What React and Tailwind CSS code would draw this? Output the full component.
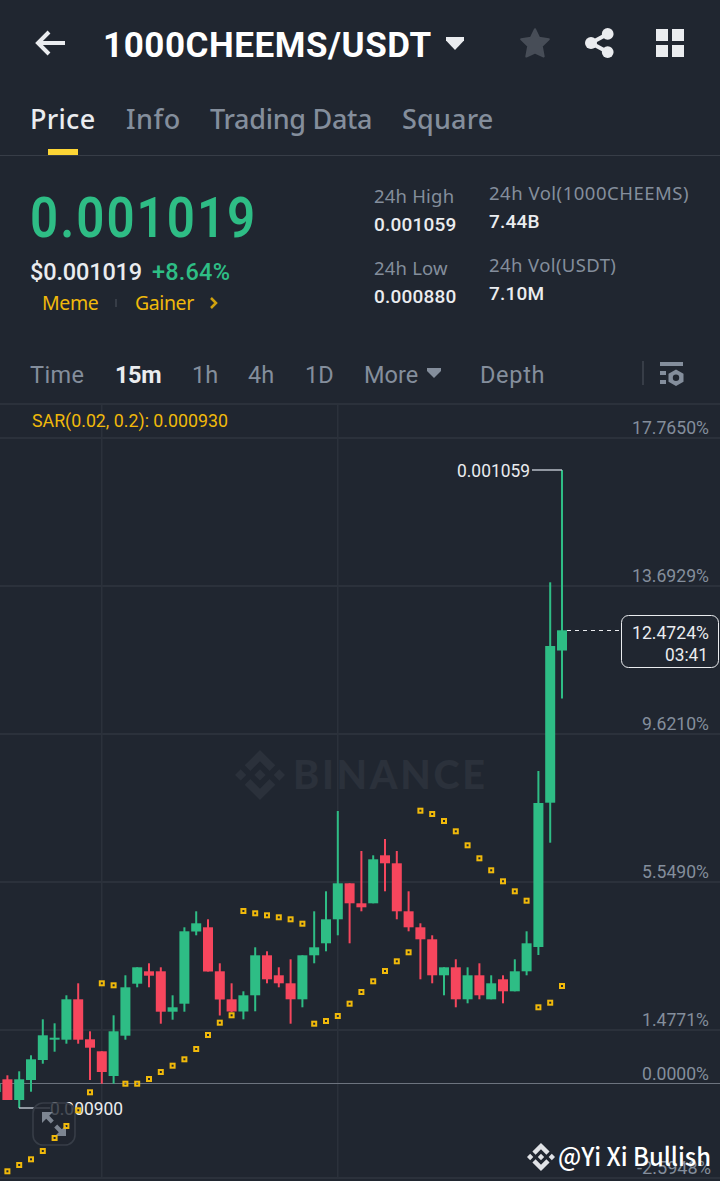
import { SiBinance } from 'react-icons/si'

const GREEN = '#2ebd85'
const RED = '#f6465d'
const BG = '#202630'

const STEP = 11.8
const FIRST_X = 7.4

// [direction, high, body top, body bottom, low]
const candles = [
  ['d', 1075.3, 1079.3, 1100, 1100],
  ['u', 1071.3, 1079.3, 1100, 1108],
  ['u', 1055.3, 1059.3, 1080, 1091.7],
  ['u', 1019.3, 1035.3, 1060, 1063.7],
  ['u', 1023.3, 1037.7, 1039.7, 1051.7],
  ['u', 995.3, 999.3, 1039.7, 1043.7],
  ['d', 983.3, 999.3, 1039.7, 1043.7],
  ['d', 1031.3, 1039.3, 1047.7, 1080],
  ['d', 1051.3, 1051.3, 1072, 1083.7],
  ['u', 1015.3, 1031.3, 1076, 1083.7],
  ['u', 975.3, 987.3, 1035.7, 1039.7],
  ['u', 967.3, 967.3, 983.7, 987.3],
  ['d', 963.3, 971.3, 975.7, 987.3],
  ['d', 967.3, 971.3, 1011.7, 1023.7],
  ['u', 995.3, 1007.3, 1011.7, 1019.7],
  ['u', 927.3, 931.3, 1003.7, 1011.7],
  ['u', 911.3, 923.3, 931.5, 935.3],
  ['d', 919.3, 927.3, 971.5, 971.5],
  ['d', 963.3, 971.3, 999.5, 1015.5],
  ['d', 983.3, 999.3, 1011.5, 1012],
  ['u', 991.3, 995.3, 1011.5, 1019.3],
  ['u', 947.3, 955.3, 995.3, 1011.3],
  ['d', 951.3, 955.3, 979.3, 983.3],
  ['d', 967.3, 975.3, 983.3, 987.3],
  ['d', 959.3, 983.3, 999.3, 1023.7],
  ['u', 955.3, 955.3, 999.3, 1007.3],
  ['u', 911.3, 947.3, 955.3, 963.3],
  ['u', 891.3, 919.3, 943.3, 951.3],
  ['u', 811, 883.3, 919.3, 935.3],
  ['d', 883.3, 883.3, 903.3, 943.3],
  ['d', 851, 903.3, 907.3, 911.3],
  ['u', 855.3, 859.3, 903.3, 903.3],
  ['d', 839, 855.3, 863.3, 891.3],
  ['d', 851, 863.3, 911.3, 919.3],
  ['d', 891.3, 911.3, 927.3, 931.3],
  ['d', 923.3, 927.3, 939.3, 979.3],
  ['d', 935.3, 939.3, 975.3, 983.3],
  ['u', 967.3, 967.3, 975.3, 995.3],
  ['d', 959.3, 967.3, 999.3, 1007.3],
  ['u', 967.3, 975.3, 999.3, 1003.3],
  ['d', 963.3, 975.3, 995.3, 999.3],
  ['u', 975.3, 983.3, 999.3, 999.3],
  ['d', 975.3, 979.3, 991.3, 1003.3],
  ['u', 959.3, 971.3, 991.3, 991.3],
  ['u', 931.3, 943.3, 971.3, 975.3],
  ['u', 771, 803, 947, 955],
  ['u', 582.3, 646, 802.7, 842.7],
  ['u', 470, 630.3, 650.5, 698.5],
]

// parabolic SAR, one point per candle
const sar = [
  1171.3, 1165, 1159.3, 1151, 1138, 1126, 1110.3, 1092.3, 983.3, 985.3, 1083.7, 1083.7,
  1079, 1072, 1065.7, 1059.3, 1049, 1035, 1022.7, 1015.3, 911, 913.3, 915.3, 917.3,
  919.3, 923.7, 1023.7, 1021, 1016, 1003.7, 992, 981.3, 971, 961.3, 952.3, 810.7,
  814, 821, 831.3, 845.3, 858.3, 870.3, 881.3, 891.3, 900.7, 1007.3, 1002.7, 986,
]

const gridY = [404, 438, 586, 734, 882, 1030, 1178]

const axisLabels = [
  { text: '17.7650%', y: 434, x: 632, w: 77 },
  { text: '13.6929%', y: 582, x: 632, w: 77 },
  { text: '9.6210%', y: 730, x: 642, w: 67 },
  { text: '5.5490%', y: 878, x: 642, w: 67 },
  { text: '1.4771%', y: 1026, x: 642, w: 67 },
  { text: '0.0000%', y: 1080, x: 642, w: 67 },
  { text: '-2.5948%', y: 1174, x: 637, w: 74 },
]

const tabs = [
  { name: 'Price', box: 'w-[96px] tracking-[0.3px]', active: true },
  { name: 'Info', box: 'w-[84px] tracking-[0.5px]' },
  { name: 'Trading Data', box: 'w-[192px] tracking-[-0.3px]' },
  { name: 'Square', box: 'w-[100px] tracking-[0.2px]' },
]

const stats = [
  { label: '24h High', value: '0.001059', spacing: 'tracking-[0.2px]' },
  { label: '24h Low', value: '0.000880', spacing: 'tracking-[0.2px]' },
]

const volumes = [
  { label: '24h Vol(1000CHEEMS)', value: '7.44B', spacing: 'tracking-[0.5px]' },
  { label: '24h Vol(USDT)', value: '7.10M', spacing: 'tracking-[0.4px]' },
]

function Header() {
  return (
    <div className="flex h-[88px] items-center pl-[34px] pr-[36px]">
      <svg width="32" height="28" viewBox="0 0 32 28" className="-mt-[2px] shrink-0" fill="none" stroke="#eaecef" strokeWidth="4">
        <path d="M31 14H4" />
        <path d="M15 3L4 14l11 11" />
      </svg>
      <h1 className="ml-[37px] mt-[2px] w-[329px] whitespace-nowrap text-[35px] font-bold leading-none tracking-[0.55px] text-white">
        1000CHEEMS/USDT
      </h1>
      <svg width="18" height="14" viewBox="0 0 18 14" className="ml-[14px] shrink-0">
        <path d="M0 0h18v4.500L9 14 0 4.500z" fill="#eaecef" transform="translate(0 -1)" />
      </svg>
      <svg width="30" height="30" viewBox="0 0 30 30" className="-mt-[2px] ml-[56px] shrink-0">
        <path
          d="M15 1.200l4.100 8.600 9.700 1.400-7 6.900 1.900 10.400-8.700-4-8.700 4 1.900-10.400-7-6.900 9.700-1.400z"
          fill="#474d57"
          stroke="#474d57"
          strokeWidth="2"
          strokeLinejoin="round"
        />
      </svg>
      <svg width="30" height="30" viewBox="0 0 30 30" className="-mt-[2px] ml-[35px] shrink-0" fill="#eaecef">
        <path d="M22.500 6L6 15l16.500 9" fill="none" stroke="#eaecef" strokeWidth="4" />
        <circle cx="22.700" cy="5.900" r="5.900" />
        <circle cx="6" cy="15" r="6" />
        <circle cx="22.700" cy="24.100" r="5.900" />
      </svg>
      <div className="-mt-[2px] ml-[41px] grid shrink-0 grid-cols-2 gap-[4px]">
        <span className="size-[12px] bg-[#eaecef]" />
        <span className="size-[12px] bg-[#eaecef]" />
        <span className="size-[12px] bg-[#eaecef]" />
        <span className="size-[12px] bg-[#eaecef]" />
      </div>
    </div>
  )
}

function Tabs() {
  return (
    <div className="flex h-[68px] border-b border-[#373d47] pl-[30px]">
      {tabs.map(tab => (
        <div key={tab.name} className={`relative shrink-0 whitespace-nowrap pt-[16px] font-[Noto_Sans] text-[27px] font-medium leading-[30px] ${tab.box} ${tab.active ? 'text-[#eaecef]' : 'text-[#848e9c]'}`}>
          {tab.name}
          {tab.active && <span className="absolute bottom-0 left-[18px] h-[6px] w-[30px] bg-[#fcd535]" />}
        </div>
      ))}
    </div>
  )
}

function Stat({ label, value, spacing }) {
  return (
    <div className="h-[72px] whitespace-nowrap">
      <div className={`font-[Noto_Sans] text-[18.5px] leading-[28px] text-[#848e9c] ${spacing}`}>{label}</div>
      <div className="pt-[1px] text-[19px] font-medium leading-[28px] tracking-[0.2px] text-[#eaecef]">{value}</div>
    </div>
  )
}

function Summary() {
  return (
    <div className="flex h-[188px] pl-[30px]">
      <div className="w-[344px] pt-[30px]">
        <div className="h-[64px] w-max origin-left scale-x-[0.88] whitespace-nowrap text-[56px] font-semibold leading-[64px] tracking-[2.3px] text-[#2ebd85]">0.001019</div>
        <div className="mt-[9px] flex h-[28px] items-center gap-[11px] whitespace-nowrap text-[23.5px] font-medium">
          <span className="w-[111px] tracking-[-0.15px] text-[#eaecef]">$0.001019</span>
          <span className="tracking-[0.2px] text-[#2ebd85]">+8.64%</span>
        </div>
        <div className="mt-[2px] flex h-[28px] items-center pl-[12px] font-[Noto_Sans] text-[19.5px] tracking-[-0.4px] text-[#f0b90b]">
          <span className="w-[73px]">Meme</span>
          <span className="h-[8px] w-[2px] bg-[#373d47]" />
          <span className="ml-[18px] w-[75px]">Gainer</span>
          <svg width="8" height="12" viewBox="0 0 8 12" fill="none" stroke="#d0a20f" strokeWidth="2.500">
            <path d="M1 1l5 5-5 5" />
          </svg>
        </div>
      </div>
      <div className="w-[115px] pt-[26px]">
        {stats.map(s => <Stat key={s.label} {...s} />)}
      </div>
      <div className="pt-[23px]">
        {volumes.map(s => <Stat key={s.label} {...s} />)}
      </div>
    </div>
  )
}

function Intervals() {
  return (
    <div className="flex h-[60px] items-center whitespace-nowrap pl-[30px] pt-[3px] text-[23.5px] text-[#848e9c]">
      <span className="w-[85px] tracking-[0.4px]">Time</span>
      <span className="w-[77px] font-bold tracking-[-0.4px] text-[#eaecef]">15m</span>
      <span className="w-[56px]">1h</span>
      <span className="w-[57px]">4h</span>
      <span className="w-[59px]">1D</span>
      <span className="w-[63px]">More</span>
      <svg width="14" height="10" viewBox="0 0 14 10" className="-mt-[5px]">
        <path d="M0 0h14v3L7 10 0 3z" fill="#848e9c" />
      </svg>
      <span className="ml-[39px] w-[162px] tracking-[0.7px]">Depth</span>
      <span className="-mt-[5px] h-[24px] w-[2px] bg-[#373d47]" />
      <svg width="26" height="26" viewBox="0 0 26 26" className="-mt-[3px] ml-[15px]" fill="#848e9c">
        <path d="M1 1h23v4H1zM1 10h6v4H1zM1 19h6v4H1z" />
        <path fillRule="evenodd" d="M17 8.500l7.500 4.200v8L17 25l-7.500-4.300v-8zM17 13.500a3.200 3.200 0 100 6.400 3.200 3.200 0 000-6.400z" />
      </svg>
    </div>
  )
}

function Candle({ index, data }) {
  const [dir, high, top, bottom, low] = data
  const x = FIRST_X + index * STEP
  return (
    <g fill={dir === 'u' ? GREEN : RED}>
      <rect x={x - 1} y={high} width="2" height={low - high} />
      <rect x={x - 5} y={top} width="10" height={bottom - top} />
    </g>
  )
}

function Chart() {
  return (
    <svg width="720" height="777" viewBox="0 404 720 777" className="block overflow-visible">
      <g fill="#2b313b">
        {gridY.map(y => <rect key={y} x="0" y={y - 1} width="720" height="2" />)}
        <rect x="101" y="405" width="1.500" height="773" />
        <rect x="337" y="405" width="1.500" height="773" />
      </g>

      <g transform="translate(235 750)">
        <SiBinance size={50} color="#2b313b" />
      </g>
      <text x="293" y="789" fill="#2b313b" fontFamily="Lato, sans-serif" fontWeight="900" fontSize="39.500" textLength="192">BINANCE</text>

      <rect x="0" y="1083" width="720" height="1" fill="#6d747f" />

      <g fill="#848e9c" fontSize="18.500">
        {axisLabels.map(l => (
          <text key={l.text} x={l.x} y={l.y} textLength={l.w} lengthAdjust="spacingAndGlyphs">{l.text}</text>
        ))}
      </g>
      <text x="32" y="427" fill="#f0b90b" fontSize="18.500" textLength="196" lengthAdjust="spacingAndGlyphs">SAR(0.02, 0.2): 0.000930</text>

      <rect x="0" y="1084" width="0.700" height="8" fill={GREEN} />
      {candles.map((c, i) => <Candle key={i} index={i} data={c} />)}

      <path d="M532 470h30M19 1108h31" stroke="#b7bdc6" strokeWidth="1.300" />
      <g fill="#eaecef" fontSize="18.500">
        <text x="457" y="477" textLength="73" lengthAdjust="spacingAndGlyphs">0.001059</text>
        <text x="50" y="1115" textLength="73" lengthAdjust="spacingAndGlyphs">0.000900</text>
      </g>

      <path d="M567 630.500h53" stroke="#eaecef" strokeWidth="1" strokeDasharray="4 4" />
      <rect x="621.500" y="615.500" width="97" height="52" rx="7" fill={BG} stroke="#eaecef" />
      <g fill="#eaecef" fontSize="18.500">
        <text x="632" y="639" textLength="77" lengthAdjust="spacingAndGlyphs">12.4724%</text>
        <text x="665" y="661" textLength="43" lengthAdjust="spacingAndGlyphs">03:41</text>
      </g>

      {/* fullscreen button */}
      <rect x="33" y="1103" width="42" height="42" rx="10" fill={BG} fillOpacity="0.800" stroke="#373d47" strokeWidth="1.600" />
      <g fill="#7d8591">
        <path d="M42 1112h11l-3.800 3.800 4.600 4.600-3 3-4.600-4.600L42 1123z" />
        <path d="M66 1136H55l3.800-3.800-4.600-4.600 3-3 4.600 4.600L66 1125z" />
      </g>

      <g fill="none" stroke="#f0b90b" strokeWidth="2">
        {sar.map((y, i) => (
          <rect key={i} x={FIRST_X + i * STEP - 2} y={y - 2} width="4" height="4" />
        ))}
      </g>

      <g transform="translate(527 1143)">
        <SiBinance size={28} color="#e0e2e6" />
      </g>
      <text x="558" y="1166" fill="#ffffff" fontFamily="Noto Sans CJK SC, sans-serif" fontWeight="500" fontSize="25" textLength="153" lengthAdjust="spacingAndGlyphs">@Yi Xi Bullish</text>
    </svg>
  )
}

export default function App() {
  return (
    <div className="h-[1181px] w-[720px] overflow-hidden bg-[#202630] font-[Roboto,sans-serif]">
      <Header />
      <Tabs />
      <Summary />
      <Intervals />
      <Chart />
    </div>
  )
}
